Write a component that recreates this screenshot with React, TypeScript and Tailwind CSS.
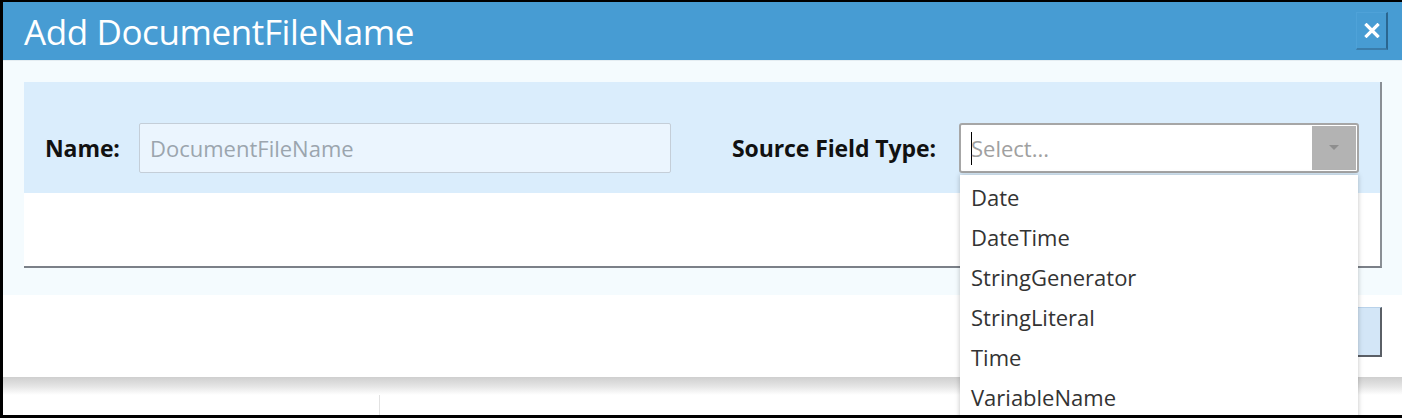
import React from "react";

const items = ["Date", "DateTime", "StringGenerator", "StringLiteral", "Time", "VariableName"];

export default function App() {
  return (
    <div
      className="relative w-[1402px] h-[418px] overflow-hidden bg-white border-t-2 border-l-[3px] border-b-[3px] border-black flex flex-col"
      style={{ fontFamily: '"Open Sans", "Noto Sans", sans-serif' }}
    >
      {/* Title bar */}
      <div className="h-[58px] shrink-0 bg-[#479cd3] flex items-center pl-[21px] pr-[14px]">
        <div className="flex-1 text-white text-[35px] leading-none tracking-[-0.4px]">Add DocumentFileName</div>
        <button className="w-[32px] h-[38px] border-t border-l border-[#4fa2d8] border-r-2 border-b-2 border-r-[#2a6690] border-b-[#3a7caa] flex items-center justify-center">
          <svg width="16" height="15" viewBox="0 0 16 15">
            <path d="M2.5 2 L13.5 13 M13.5 2 L2.5 13" stroke="white" strokeWidth="3.2" strokeLinecap="square" />
          </svg>
        </button>
      </div>
      <div className="h-px shrink-0 bg-[#e4edf2]" />

      {/* Body */}
      <div className="shrink-0 bg-[#f4fbfe] pt-[21px] pl-[21px] pr-[20px] pb-[27px]">
        <div className="border-r-2 border-r-[#8a8f95] border-b-2 border-b-[#7b8088]">
          <div className="bg-[#daedfc] h-[111px] pt-[41px] pl-[21px] flex items-start">
            <div className="w-[94px] shrink-0 h-[50px] flex items-center text-[23px] font-bold text-[#111] tracking-[-0.1px]">Name:</div>
            <div className="w-[532px] h-[50px] shrink-0 rounded-[2px] border border-[#c4ced8] bg-[#ebf5fe] flex items-center pl-[10px] text-[22px] text-[#9ba5ae]">
              DocumentFileName
            </div>
            <div className="ml-[61px] w-[227px] shrink-0 h-[50px] flex items-center text-[23px] font-bold text-[#111] tracking-[-0.1px]">
              Source Field Type:
            </div>
            <div className="w-[400px] h-[50px] shrink-0 rounded-[3px] border-2 border-[#a6a6a6] bg-white flex items-center pl-[10px] pr-[1px]">
              <div className="w-px h-[33px] bg-black" />
              <div className="flex-1 text-[22px] text-[#a0a0a0] -ml-px">Select...</div>
              <div className="w-[44px] h-[44px] bg-[#b3b3b3] flex items-center justify-center">
                <svg width="10" height="6" viewBox="0 0 10 6">
                  <path d="M0 0 L10 0 L5 5 Z" fill="#8e8e8e" />
                </svg>
              </div>
            </div>
          </div>
          <div className="bg-white h-[73px]" />
        </div>
      </div>

      {/* Footer */}
      <div className="h-[82px] shrink-0 bg-white flex justify-end pt-[12px] pr-[20px]">
        <div className="w-[120px] h-[50px] bg-[#d3e6f7] border-l border-t border-[#b9d2ea] border-r-2 border-b-2 border-r-[#5a5f66] border-b-[#5a5f66]" />
      </div>

      {/* Dialog shadow and page behind */}
      <div className="h-[18px] shrink-0 bg-linear-to-b from-[#cfcfcf] via-[#e4e4e4] to-white" />
      <div className="flex-1 flex">
        <div className="w-[377px] shrink-0 border-r border-[#e2e2e2]" />
      </div>

      {/* Open dropdown list */}
      <div className="absolute left-[957px] top-[173px] w-[398px] h-[260px] bg-white shadow-[0_0_5px_rgba(0,0,0,0.25)] pt-[2px]">
        {items.map((it) => (
          <div key={it} className="h-[40px] flex items-center pl-[11px] text-[22px] text-[#333]">
            {it}
          </div>
        ))}
      </div>
    </div>
  );
}
